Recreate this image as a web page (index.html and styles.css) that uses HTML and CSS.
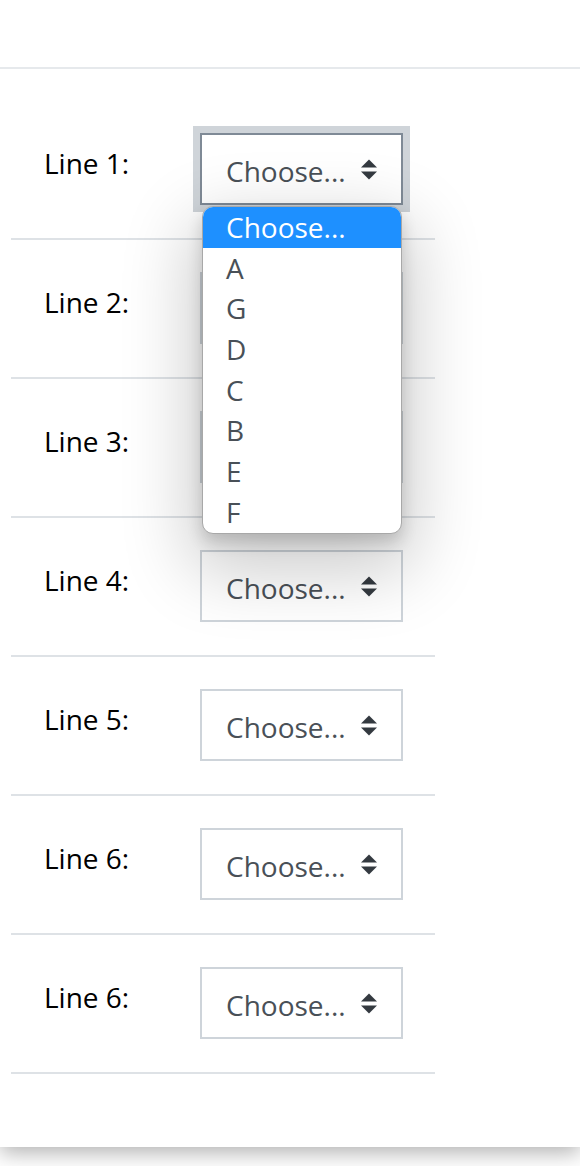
FILE: index.html
```html
<!DOCTYPE html>
<html lang="en">
<head>
<meta charset="utf-8">
<title>Lines</title>
<link rel="stylesheet" href="styles.css">
</head>
<body>
<header class="top"></header>
<main class="card">
  <div class="rows">
    <div class="row">
      <label class="label">Line 1:</label>
      <div class="field">
        <div class="select is-focused"><span class="select-text">Choose...</span><svg class="arrows" viewBox="0 0 4 5" width="16" height="21"><path d="M2 0L0 2h4zm0 5L0 3h4z" fill="#343a40"/></svg></div>
        <ul class="popup">
          <li class="opt is-active">Choose...</li>
          <li class="opt">A</li>
          <li class="opt">G</li>
          <li class="opt">D</li>
          <li class="opt">C</li>
          <li class="opt">B</li>
          <li class="opt">E</li>
          <li class="opt">F</li>
        </ul>
      </div>
    </div>
    <div class="row">
      <label class="label">Line 2:</label>
      <div class="field"><div class="select"><span class="select-text">Choose...</span><svg class="arrows" viewBox="0 0 4 5" width="16" height="21"><path d="M2 0L0 2h4zm0 5L0 3h4z" fill="#343a40"/></svg></div></div>
    </div>
    <div class="row">
      <label class="label">Line 3:</label>
      <div class="field"><div class="select"><span class="select-text">Choose...</span><svg class="arrows" viewBox="0 0 4 5" width="16" height="21"><path d="M2 0L0 2h4zm0 5L0 3h4z" fill="#343a40"/></svg></div></div>
    </div>
    <div class="row">
      <label class="label">Line 4:</label>
      <div class="field"><div class="select"><span class="select-text">Choose...</span><svg class="arrows" viewBox="0 0 4 5" width="16" height="21"><path d="M2 0L0 2h4zm0 5L0 3h4z" fill="#343a40"/></svg></div></div>
    </div>
    <div class="row">
      <label class="label">Line 5:</label>
      <div class="field"><div class="select"><span class="select-text">Choose...</span><svg class="arrows" viewBox="0 0 4 5" width="16" height="21"><path d="M2 0L0 2h4zm0 5L0 3h4z" fill="#343a40"/></svg></div></div>
    </div>
    <div class="row">
      <label class="label">Line 6:</label>
      <div class="field"><div class="select"><span class="select-text">Choose...</span><svg class="arrows" viewBox="0 0 4 5" width="16" height="21"><path d="M2 0L0 2h4zm0 5L0 3h4z" fill="#343a40"/></svg></div></div>
    </div>
    <div class="row">
      <label class="label">Line 6:</label>
      <div class="field"><div class="select"><span class="select-text">Choose...</span><svg class="arrows" viewBox="0 0 4 5" width="16" height="21"><path d="M2 0L0 2h4zm0 5L0 3h4z" fill="#343a40"/></svg></div></div>
    </div>
  </div>
</main>
</body>
</html>
```
FILE: styles.css
```css
html, body {
  margin: 0;
  padding: 0;
  background: #ffffff;
}
body {
  font-family: "Open Sans", "Noto Sans", sans-serif;
  height: 1166px;
  overflow: hidden;
}
.top {
  height: 67px;
  border-bottom: 2px solid #e6e9ec;
  background: #ffffff;
  position: relative;
  z-index: 2;
}
.card {
  background: #ffffff;
  padding: 32px 0 72px;
  height: 1078px;
  box-sizing: border-box;
  box-shadow: 0 6px 20px rgba(0, 0, 0, 0.3);
  position: relative;
  z-index: 1;
}
.rows {
  width: 424px;
  margin-left: 11px;
}
.row {
  display: flex;
  align-items: flex-start;
  padding: 32px 0 33px 33px;
  border-bottom: 2px solid #dee2e6;
}
.label {
  width: 156px;
  font-size: 28px;
  line-height: 40px;
  padding-top: 10px;
  color: #000000;
}
.field {
  position: relative;
}
.select {
  box-sizing: border-box;
  width: 203px;
  height: 72px;
  border: 2px solid #ced4da;
  background: #ffffff;
  display: flex;
  align-items: center;
  padding: 4px 0 0 24px;
  color: #495057;
  font-size: 28px;
}
.select-text {
  flex: 1;
}
.arrows {
  margin-right: 24px;
  margin-top: -3px;
}
.select.is-focused {
  border-color: #7f8a96;
  box-shadow: 0 0 0 7px #cfd4d9;
}
.popup {
  position: absolute;
  left: 2px;
  top: 73px;
  width: 200px;
  box-sizing: border-box;
  margin: 0;
  padding: 0;
  list-style: none;
  background: #ffffff;
  border: 1px solid #a8a8a8;
  border-radius: 11px;
  overflow: hidden;
  z-index: 5;
  box-shadow: 0 26px 70px 12px rgba(0, 0, 0, 0.2), 0 8px 16px rgba(0, 0, 0, 0.16);
}
.opt {
  height: 40.7px;
  line-height: 40px;
  padding-left: 23px;
  font-size: 28px;
  color: #495057;
}
.opt.is-active {
  background: #1e90ff;
  color: #ffffff;
}
```
